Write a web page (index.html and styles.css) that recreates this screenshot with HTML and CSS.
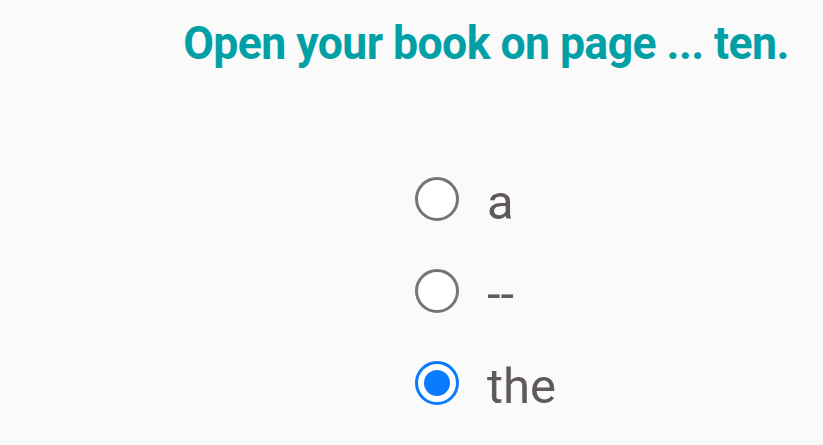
FILE: index.html
```html
<!DOCTYPE html>
<html>
<head>
<meta charset="utf-8">
<link rel="stylesheet" href="styles.css">
</head>
<body>
<div class="page">
  <h1 class="title">Open your book on page ... ten.</h1>
  <div class="options">
    <label class="option"><span class="radio"></span><span class="label">a</span></label>
    <label class="option"><span class="radio"></span><span class="label">--</span></label>
    <label class="option"><span class="radio checked"></span><span class="label">the</span></label>
  </div>
</div>
</body>
</html>
```
FILE: styles.css
```css
html, body {
  margin: 0;
  padding: 0;
  background: #fafafa;
}
.page {
  width: 823px;
  height: 445px;
  font-family: Roboto, "Noto Sans", sans-serif;
}
.title {
  margin: 0;
  padding: 16px 36px 0 0;
  text-align: right;
  font-size: 47px;
  font-weight: 700;
  color: #00a0a6;
  letter-spacing: -0.6px;
  line-height: 54px;
  transform: scaleX(0.948);
  transform-origin: right center;
}
.options {
  display: flex;
  flex-direction: column;
  gap: 48px;
  padding: 107px 0 0 415px;
}
.option {
  display: flex;
  align-items: center;
  height: 44px;
  gap: 28px;
}
.radio {
  box-sizing: border-box;
  width: 44px;
  height: 44px;
  border: 3px solid #757575;
  border-radius: 50%;
  background: #fff;
  flex: none;
  position: relative;
}
.radio.checked {
  border-color: #0a7bff;
}
.radio.checked::after {
  content: "";
  position: absolute;
  left: 6px;
  top: 6px;
  width: 26px;
  height: 26px;
  border-radius: 50%;
  background: #0a7bff;
}
.label {
  font-size: 49px;
  color: #5f5957;
  line-height: 44px;
  padding-top: 8px;
}
```
